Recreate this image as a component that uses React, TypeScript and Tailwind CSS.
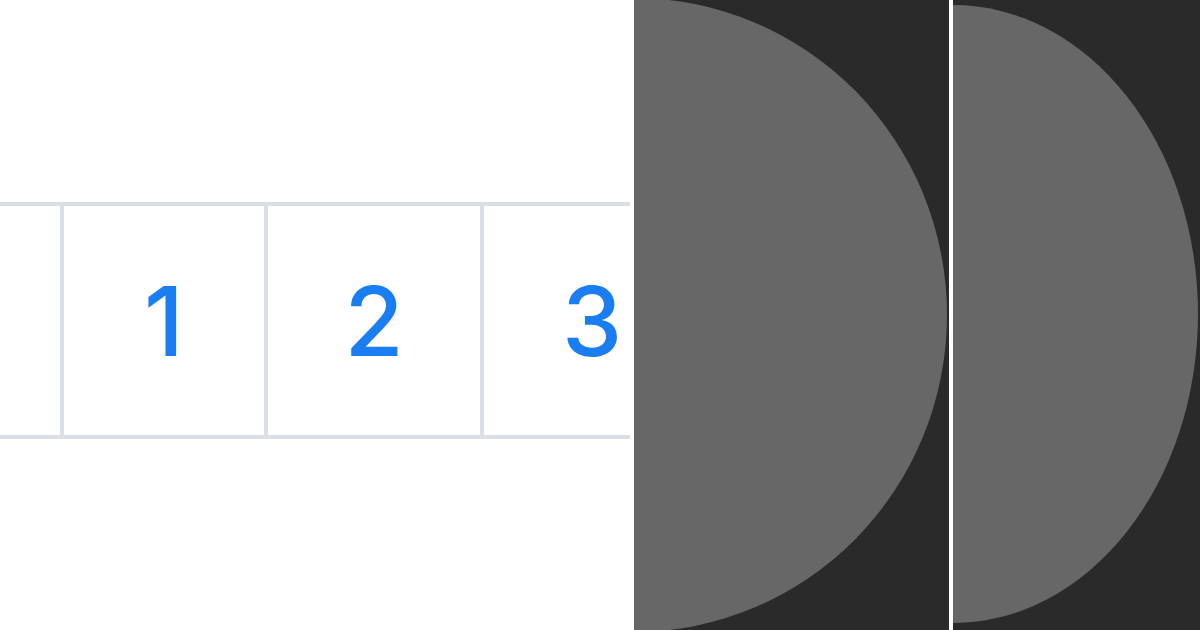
const pages = ["", "1", "2", "3"];

function PageCell({ label, first }: { label: string; first?: boolean }) {
  const width = first ? "w-[64px]" : label === "1" ? "w-[204px]" : label === "2" ? "w-[216px]" : "w-[220px]";
  return (
    <div
      className={`${width} shrink-0 h-full flex items-center justify-center border-y-4 border-r-4 border-[#dadfe7] text-[#1a7ef2] text-[96px] font-medium leading-none`}
    >
      {label}
    </div>
  );
}

function HalfDisc({ w, rx, ry, cy }: { w: number; rx: number; ry: number; cy: number }) {
  return (
    <svg width={w} height={630} viewBox={`0 0 ${w} 630`} className="block">
      <ellipse cx={0} cy={cy} rx={rx} ry={ry} fill="#676767" />
    </svg>
  );
}

export default function App() {
  return (
    <div className="w-[1200px] h-[630px] flex gap-[4px] bg-white overflow-hidden font-['Inter','Liberation_Sans',Arial,sans-serif]">
      <div className="w-[630px] shrink-0 overflow-hidden bg-white pt-[202px]">
        <div className="flex h-[237px]">
          {pages.map((p, i) => (
            <PageCell key={i} label={p} first={i === 0} />
          ))}
        </div>
      </div>
      <div className="w-[315px] shrink-0 bg-[#2a2a2a] overflow-hidden">
        <HalfDisc w={315} rx={313} ry={317} cy={315} />
      </div>
      <div className="w-[247px] shrink-0 bg-[#2a2a2a] overflow-hidden">
        <HalfDisc w={247} rx={245} ry={309} cy={314} />
      </div>
    </div>
  );
}
